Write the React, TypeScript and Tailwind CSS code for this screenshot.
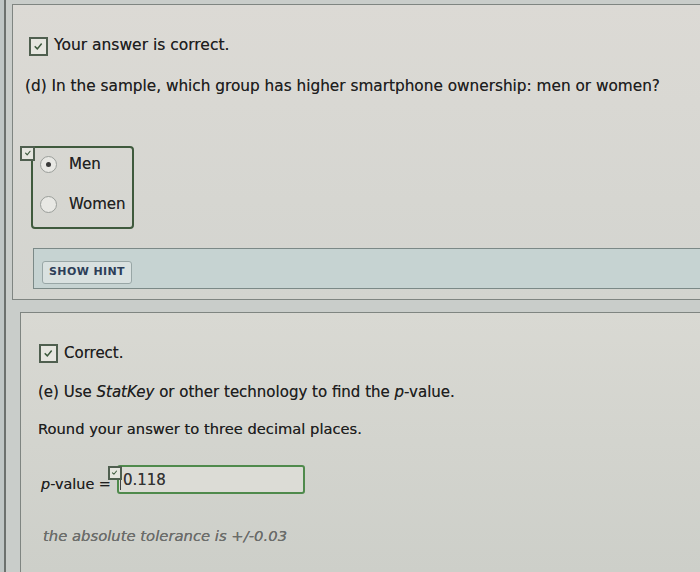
import React from 'react';

const CheckBox = ({ size = 19 }: { size?: number }) => (
  <span
    className="inline-flex items-center justify-center border-2 border-[#4f5f4f] bg-[#e6e6e0] shrink-0"
    style={{ width: size, height: size }}
  >
    <svg viewBox="0 0 12 12" className="w-[70%] h-[70%]" fill="none">
      <path d="M2.5 6.5 L5 9 L9.5 3.5" stroke="#3d5a3d" strokeWidth={1.8} strokeLinecap="round" strokeLinejoin="round" />
    </svg>
  </span>
);

const Radio = ({ label, checked }: { label: string; checked?: boolean }) => (
  <div className="flex items-center h-[20px]">
    <span className="ml-[7px] w-[17px] h-[17px] rounded-full border border-[#9a9e9a] bg-[#e8e8e4] flex items-center justify-center">
      {checked && <span className="w-[5px] h-[5px] rounded-full bg-[#3a3a3a]" />}
    </span>
    <span className="ml-[12px] text-[15px] text-[#222]">{label}</span>
  </div>
);

export default function App() {
  return (
    <div
      className="w-[700px] h-[572px] overflow-hidden bg-[#bfc6c5] pl-[4px] [text-shadow:0_0_0.5px_rgba(30,30,30,0.6)]"
      style={{ fontFamily: '"DejaVu Sans", Verdana, sans-serif' }}
    >
      <div className="h-full border-l-2 border-[#6c716e] bg-[#c9cdca] pl-[6px] pt-[4px] flex flex-col">
        {/* Part (d) */}
        <div className="h-[296px] shrink-0 border-l border-t border-b border-[#7f8581] bg-linear-to-b from-[#dcdad5] to-[#d3d4cf] flex flex-col">
          <div className="mt-[31px] ml-[16px] flex items-center gap-[6px] h-[20px]">
            <CheckBox />
            <span className="text-[15.5px] text-[#1e1e1e]">Your answer is correct.</span>
          </div>
          <div className="mt-[20px] ml-[12px] h-[20px] flex items-center text-[15.3px] text-[#1e1e1e] whitespace-nowrap">
            (d) In the sample, which group has higher smartphone ownership: men or women?
          </div>
          <div className="relative mt-[50px] ml-[18px] w-[103px] h-[83px] border-2 border-[#3f5a3d] rounded-[4px] pt-[6px] flex flex-col gap-[20px]">
            <span className="absolute -top-[8px] -left-[13px]">
              <CheckBox size={15} />
            </span>
            <Radio label="Men" checked />
            <Radio label="Women" />
          </div>
          <div className="mt-[19px] ml-[20px] h-[41px] border border-r-0 border-[#7b8987] bg-[#c6d3d2] pl-[8px] pt-[9px]">
            <button className="w-[90px] h-[23px] rounded-[3px] border border-[#98a6a6] bg-[#d9e1e0] text-[11px] font-bold tracking-[0.4px] text-[#2d3e58]">
              SHOW HINT
            </button>
          </div>
        </div>

        {/* Part (e) */}
        <div className="mt-[12px] ml-[8px] flex-1 border-l border-t border-[#7f8581] bg-linear-to-b from-[#d9d9d3] to-[#cdcfc9] flex flex-col">
          <div className="mt-[30px] ml-[18px] flex items-center gap-[6px] h-[20px]">
            <CheckBox />
            <span className="text-[15px] text-[#1e1e1e]">Correct.</span>
          </div>
          <div className="mt-[19px] ml-[17px] h-[20px] flex items-center text-[15px] text-[#1e1e1e] whitespace-pre">
            (e) Use <i>StatKey</i> or other technology to find the <i>p</i>-value.
          </div>
          <div className="mt-[17px] ml-[17px] h-[20px] flex items-center text-[14.7px] text-[#1e1e1e]">
            Round your answer to three decimal places.
          </div>
          <div className="mt-[23px] ml-[20px] flex items-end h-[32px]">
            <span className="text-[14.4px] text-[#1e1e1e] mb-[-2px]">
              <i>p</i>-value =
            </span>
            <div className="relative ml-[6px] w-[188px] h-[29px] border-2 border-[#4f8a4c] rounded-[3px] bg-[#dcdcd6] flex items-center">
              <span className="absolute -top-[8px] -left-[11px]">
                <CheckBox size={14} />
              </span>
              <span className="ml-[1px] h-[20px] border-l border-[#444] pl-[2px] text-[15px] text-[#333] leading-[20px]">0.118</span>
            </div>
          </div>
          <div className="mt-[32px] ml-[22px] h-[20px] flex items-center text-[14.8px] italic text-[#6b6d6b]">
            the absolute tolerance is +/-0.03
          </div>
        </div>
      </div>
    </div>
  );
}
